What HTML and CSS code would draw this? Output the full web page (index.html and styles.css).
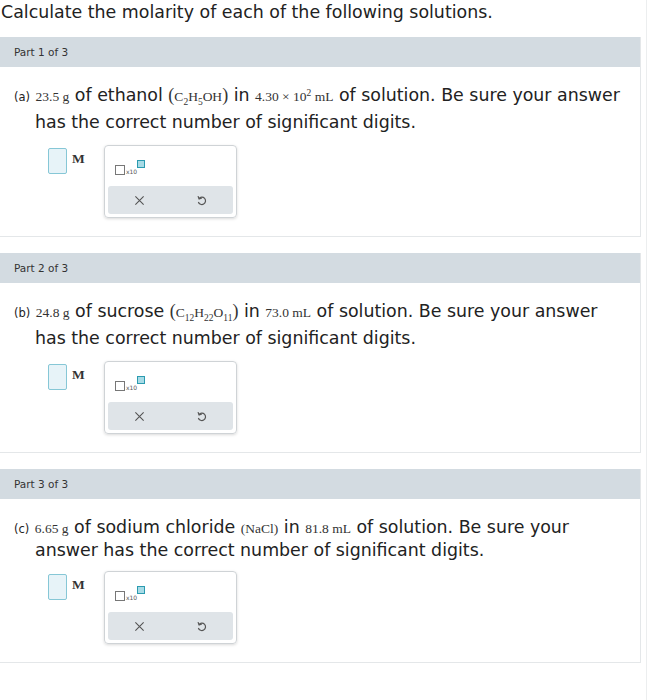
FILE: index.html
```html
<!DOCTYPE html>
<html>
<head>
<meta charset="utf-8">
<link rel="stylesheet" href="styles.css">
</head>
<body>
<div class="page">
  <h1 class="title">Calculate the molarity of each of the following solutions.</h1>

  <section class="card">
    <div class="card-head">Part 1 of 3</div>
    <div class="card-body">
      <p class="question tall"><span class="lbl">(a)</span> <span class="m">23.5 g</span> of ethanol <span class="m"><span class="par">(</span>C<sub>2</sub>H<sub>5</sub>OH<span class="par">)</span></span> in <span class="m">4.30 × 10<sup>2</sup> mL</span> of solution. Be sure your answer has the correct number of significant digits.</p>
      <div class="answer-row">
        <span class="box"></span><span class="unit">M</span>
        <div class="panel">
          <div class="sci"><span class="sq"></span><span class="x10">x10</span><span class="sqt"></span></div>
          <div class="btns">
            <svg class="ico" viewBox="0 0 12 12" width="12" height="12"><path d="M1.5 1.5 L10.5 10.5 M10.5 1.5 L1.5 10.5" stroke="#555" stroke-width="1.2" fill="none"/></svg>
            <svg class="ico" viewBox="0 0 12 12" width="12" height="12"><path d="M3.2 4 A4 4 0 1 1 2.6 7.6" stroke="#555" stroke-width="1.3" fill="none"/><path d="M2.2 1.2 L3.4 4.4 L6.4 3.3" stroke="#555" stroke-width="1.3" fill="none"/></svg>
          </div>
        </div>
      </div>
    </div>
  </section>

  <section class="card">
    <div class="card-head">Part 2 of 3</div>
    <div class="card-body">
      <p class="question tall"><span class="lbl">(b)</span> <span class="m">24.8 g</span> of sucrose <span class="m"><span class="par">(</span>C<sub>12</sub>H<sub>22</sub>O<sub>11</sub><span class="par">)</span></span> in <span class="m">73.0 mL</span> of solution. Be sure your answer has the correct number of significant digits.</p>
      <div class="answer-row">
        <span class="box"></span><span class="unit">M</span>
        <div class="panel">
          <div class="sci"><span class="sq"></span><span class="x10">x10</span><span class="sqt"></span></div>
          <div class="btns">
            <svg class="ico" viewBox="0 0 12 12" width="12" height="12"><path d="M1.5 1.5 L10.5 10.5 M10.5 1.5 L1.5 10.5" stroke="#555" stroke-width="1.2" fill="none"/></svg>
            <svg class="ico" viewBox="0 0 12 12" width="12" height="12"><path d="M3.2 4 A4 4 0 1 1 2.6 7.6" stroke="#555" stroke-width="1.3" fill="none"/><path d="M2.2 1.2 L3.4 4.4 L6.4 3.3" stroke="#555" stroke-width="1.3" fill="none"/></svg>
          </div>
        </div>
      </div>
    </div>
  </section>

  <section class="card">
    <div class="card-head">Part 3 of 3</div>
    <div class="card-body">
      <p class="question"><span class="lbl">(c)</span> <span class="m">6.65 g</span> of sodium chloride <span class="m">(NaCl)</span> in <span class="m">81.8 mL</span> of solution. Be sure your answer has the correct number of significant digits.</p>
      <div class="answer-row short">
        <span class="box"></span><span class="unit">M</span>
        <div class="panel">
          <div class="sci"><span class="sq"></span><span class="x10">x10</span><span class="sqt"></span></div>
          <div class="btns">
            <svg class="ico" viewBox="0 0 12 12" width="12" height="12"><path d="M1.5 1.5 L10.5 10.5 M10.5 1.5 L1.5 10.5" stroke="#555" stroke-width="1.2" fill="none"/></svg>
            <svg class="ico" viewBox="0 0 12 12" width="12" height="12"><path d="M3.2 4 A4 4 0 1 1 2.6 7.6" stroke="#555" stroke-width="1.3" fill="none"/><path d="M2.2 1.2 L3.4 4.4 L6.4 3.3" stroke="#555" stroke-width="1.3" fill="none"/></svg>
          </div>
        </div>
      </div>
    </div>
  </section>
</div>
</body>
</html>
```

FILE: styles.css
```css
html, body {
  margin: 0;
  padding: 0;
  background: #ffffff;
}
body {
  font-family: "DejaVu Sans", Verdana, sans-serif;
  color: #222;
}
.page {
  width: 647px;
  border-right: 1px solid #eceeef;
  min-height: 700px;
  box-sizing: border-box;
}
.title {
  margin: 0;
  padding: 1px 0 0 1px;
  font-size: 17.4px;
  font-weight: normal;
  line-height: 22px;
  color: #222;
}
.card {
  margin-top: 14px;
  width: 641px;
  box-sizing: border-box;
  border: 1px solid #e4e7e9;
  border-top: none;
  border-left: none;
}
.card + .card {
  margin-top: 16px;
}
.card-head {
  background: #d3dbe1;
  height: 30px;
  line-height: 30px;
  padding-left: 14px;
  font-size: 10.5px;
  color: #333;
}
.card-body {
  padding: 14px 14px 18px 14px;
}
.question {
  margin: 0;
  font-size: 17.4px;
  line-height: 23px;
  padding-left: 21px;
  padding-top: 3px;
  text-indent: -21px;
  color: #222;
}
.question.tall {
  line-height: 26.5px;
  padding-top: 1px;
}
.lbl {
  font-size: 11.5px;
  line-height: 1;
}
.m {
  font-family: "Liberation Serif", "Times New Roman", serif;
  font-size: 13.5px;
  line-height: 1;
  color: #333;
}
.m sub, .m sup {
  font-size: 9.5px;
  line-height: 0;
}
.par {
  font-size: 18px;
}
.answer-row {
  display: flex;
  align-items: flex-start;
  margin-top: 10px;
  padding-left: 34px;
}
.answer-row.short {
  margin-top: 9px;
}
.box {
  display: block;
  width: 17px;
  height: 24px;
  border: 1px solid #86c7d6;
  background: #e7f3f8;
  border-radius: 2px;
  margin-top: 3px;
}
.unit {
  font-family: "Liberation Serif", "Times New Roman", serif;
  font-size: 13.5px;
  font-weight: bold;
  color: #333;
  margin-left: 5px;
  margin-top: 6px;
  width: 32px;
}
.panel {
  width: 133px;
  height: 73px;
  box-sizing: border-box;
  border: 1px solid #cfd3d6;
  border-radius: 4px;
  box-shadow: 0 1px 3px rgba(0,0,0,0.15);
  padding: 3px;
  display: flex;
  flex-direction: column;
}
.sci {
  height: 35px;
  display: flex;
  align-items: flex-end;
  padding-left: 7px;
  box-sizing: border-box;
}
.sci .sq {
  width: 8px;
  height: 8px;
  border: 1px solid #777;
  margin-bottom: 9px;
}
.sci .x10 {
  font-size: 6px;
  color: #555;
  margin-bottom: 9px;
  margin-left: 1px;
}
.sci .sqt {
  width: 6px;
  height: 6px;
  border: 1px solid #2b9bb0;
  background: #a8dbe6;
  margin-bottom: 16px;
}
.btns {
  flex: 1;
  background: #dfe4e8;
  border-radius: 3px;
  display: flex;
  align-items: center;
  justify-content: space-between;
  padding: 0 26px;
  margin-top: 2px;
}
.ico {
  display: block;
  width: 11px;
  height: 11px;
}
```
